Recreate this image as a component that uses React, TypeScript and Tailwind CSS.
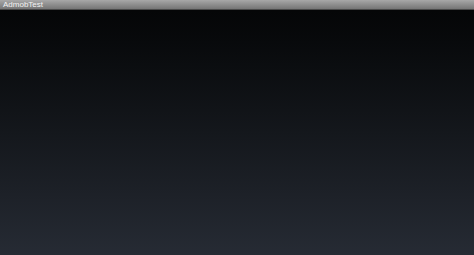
export default function App() {
  return (
    <div className="w-[474px] h-[255px] flex flex-col bg-[#050607] font-['Liberation_Sans',Arial,sans-serif]">
      <div className="h-[10px] flex items-center px-[3px] bg-gradient-to-b from-[#a8a8a8] to-[#767676] border-b border-[#4a4a4a]">
        <span className="text-[8px] leading-none text-[#f2f2f2]">AdmobTest</span>
      </div>
      <div className="flex-1 bg-gradient-to-b from-[#050607] to-[#262b34]" />
    </div>
  );
}
